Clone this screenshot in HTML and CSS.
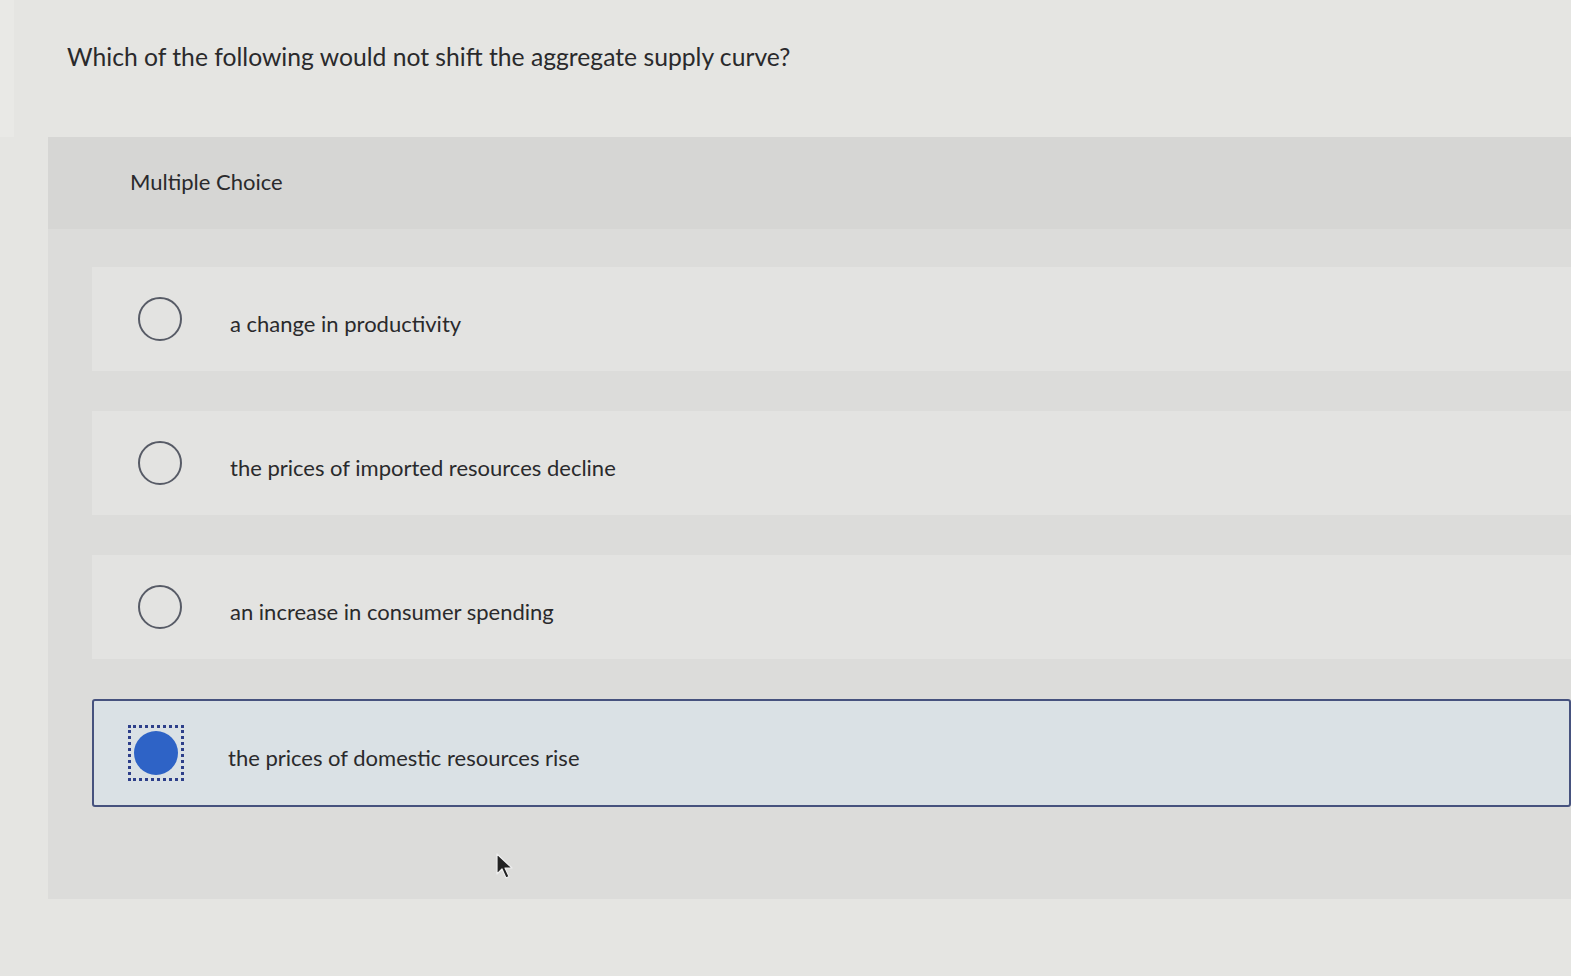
FILE: index.html
```html
<!DOCTYPE html>
<html lang="en">

<head>
    <meta charset="utf-8">
    <meta name="viewport" content="width=device-width, initial-scale=1.0">
    <title>Multiple Choice</title>
    <link rel="stylesheet" href="styles.css">
</head>

<body>

    <div class="spørgsmål">
        <p>Which of the following would not shift the aggregate supply curve?</p>
    </div>

    <section class="valg">
        <h2>Multiple Choice</h2>

        <div class="liste">
            <label class="svar">
                <span class="radio"></span>
                <span class="tekst">a change in productivity</span>
            </label>
            <label class="svar">
                <span class="radio"></span>
                <span class="tekst">the prices of imported resources decline</span>
            </label>
            <label class="svar">
                <span class="radio"></span>
                <span class="tekst">an increase in consumer spending</span>
            </label>
            <label class="svar valgt">
                <span class="fokus"><span class="radio"></span></span>
                <span class="tekst">the prices of domestic resources rise</span>
            </label>
        </div>
    </section>

    <svg class="markør" width="18" height="28" viewBox="0 0 18 28">
        <path d="M1 1 L1 21 L6 16 L10 25 L13 23.5 L9 15 L16 15 Z" fill="#222" stroke="#eee" stroke-width="1.2" stroke-linejoin="round"/>
    </svg>

</body>

</html>
```

FILE: styles.css
```css
body {
    margin: 0;
    background-color: #e5e5e2;
    font-family: Lato, "Open Sans", sans-serif;
    color: #2a2a2c;
    position: relative;
    min-height: 976px;
}

.spørgsmål {
    height: 137px;
    padding-left: 53px;
    box-sizing: border-box;
    border-left: 14px solid #e9e9e6;
}

.spørgsmål p {
    margin: 0;
    padding-top: 42px;
    font-size: 24.7px;
}

.valg {
    margin-left: 48px;
    background-color: #dcdcda;
    padding-bottom: 92px;
}

h2 {
    margin: 0;
    height: 92px;
    box-sizing: border-box;
    padding: 31px 0 0 82px;
    font-size: 22px;
    font-weight: 400;
    background-color: #d6d6d4;
}

.liste {
    display: flex;
    flex-direction: column;
    gap: 40px;
    padding: 38px 0 0 44px;
}

.svar {
    display: flex;
    align-items: center;
    height: 104px;
    padding-left: 46px;
    background-color: #e3e3e1;
    font-size: 22px;
}

.radio {
    width: 40px;
    height: 40px;
    border: 2px solid #575b66;
    border-radius: 50%;
    flex-shrink: 0;
    box-sizing: content-box;
}

.tekst {
    margin-left: 48px;
    padding-top: 8px;
}

.valgt {
    background-color: #dae1e5;
    border: 2px solid #46527e;
    border-radius: 3px;
    padding-left: 34px;
}

.fokus {
    display: flex;
    padding: 3px;
    border: 3px dotted #2d3f8a;
}

.valgt .radio {
    width: 44px;
    height: 44px;
    border: none;
    background-color: #2e63c6;
}

.valgt .tekst {
    margin-left: 44px;
}

.markør {
    position: absolute;
    left: 496px;
    top: 853px;
}
```
